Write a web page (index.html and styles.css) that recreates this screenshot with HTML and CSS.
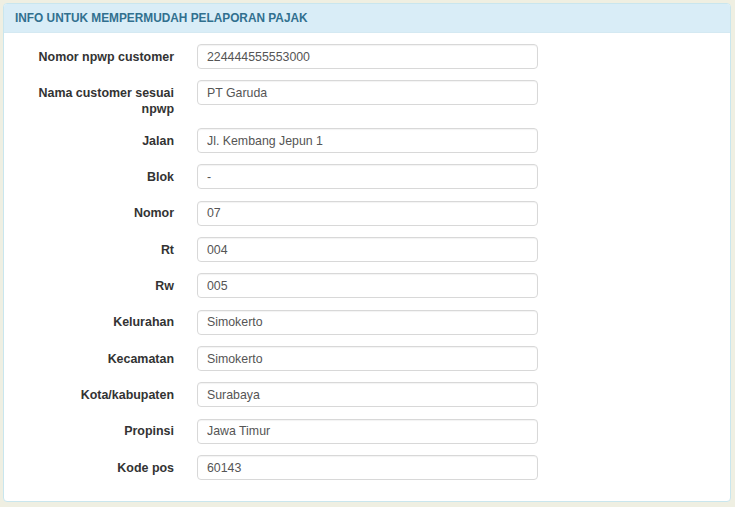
FILE: index.html
```html
<!DOCTYPE html>
<html>
<head>
<meta charset="utf-8">
<link rel="stylesheet" href="styles.css">
</head>
<body>
<div class="panel">
  <div class="panel-heading">INFO UNTUK MEMPERMUDAH PELAPORAN PAJAK</div>
  <div class="panel-body">
    <div class="row"><label class="lbl">Nomor npwp customer</label><input class="field" value="224444555553000"></div>
    <div class="row"><label class="lbl">Nama customer sesuai npwp</label><input class="field" value="PT Garuda"></div>
    <div class="row"><label class="lbl">Jalan</label><input class="field" value="Jl. Kembang Jepun 1"></div>
    <div class="row"><label class="lbl">Blok</label><input class="field" value="-"></div>
    <div class="row"><label class="lbl">Nomor</label><input class="field" value="07"></div>
    <div class="row"><label class="lbl">Rt</label><input class="field" value="004"></div>
    <div class="row"><label class="lbl">Rw</label><input class="field" value="005"></div>
    <div class="row"><label class="lbl">Kelurahan</label><input class="field" value="Simokerto"></div>
    <div class="row"><label class="lbl">Kecamatan</label><input class="field" value="Simokerto"></div>
    <div class="row"><label class="lbl">Kota/kabupaten</label><input class="field" value="Surabaya"></div>
    <div class="row"><label class="lbl">Propinsi</label><input class="field" value="Jawa Timur"></div>
    <div class="row"><label class="lbl">Kode pos</label><input class="field" value="60143"></div>
  </div>
</div>
</body>
</html>
```
FILE: styles.css
```css
html, body {
  margin: 0;
  padding: 0;
}
body {
  background: #efefe2;
  padding: 3px 0 0 3px;
  font-family: "Liberation Sans", Arial, sans-serif;
  height: 507px;
  box-sizing: border-box;
}
.panel {
  width: 728px;
  box-sizing: border-box;
  background: #fff;
  border: 1px solid #c9e6ee;
  border-radius: 4px;
  overflow: hidden;
}
.panel-heading {
  background: #d9edf7;
  color: #31708f;
  font-weight: bold;
  font-size: 11.85px;
  height: 29px;
  line-height: 29px;
  padding-left: 11px;
  border-bottom: 1px solid #d4e9f2;
  box-sizing: border-box;
}
.panel-body {
  padding: 11px 0 10px 20px;
}
.row {
  display: flex;
  align-items: flex-start;
  margin-bottom: 11.33px;
}
.lbl {
  width: 150px;
  margin-right: 23px;
  text-align: right;
  font-weight: bold;
  font-size: 12.45px;
  line-height: 16px;
  padding-top: 4.5px;
  color: #333;
}
.field {
  width: 341px;
  height: 25px;
  box-sizing: border-box;
  border: 1px solid #d8d8d8;
  border-radius: 4px;
  box-shadow: inset 0 1px 1px rgba(0,0,0,0.05);
  padding: 0 9px;
  margin: 0;
  font-family: "Liberation Sans", Arial, sans-serif;
  font-size: 12.35px;
  color: #555;
  background: #fff;
  outline: none;
}
```
